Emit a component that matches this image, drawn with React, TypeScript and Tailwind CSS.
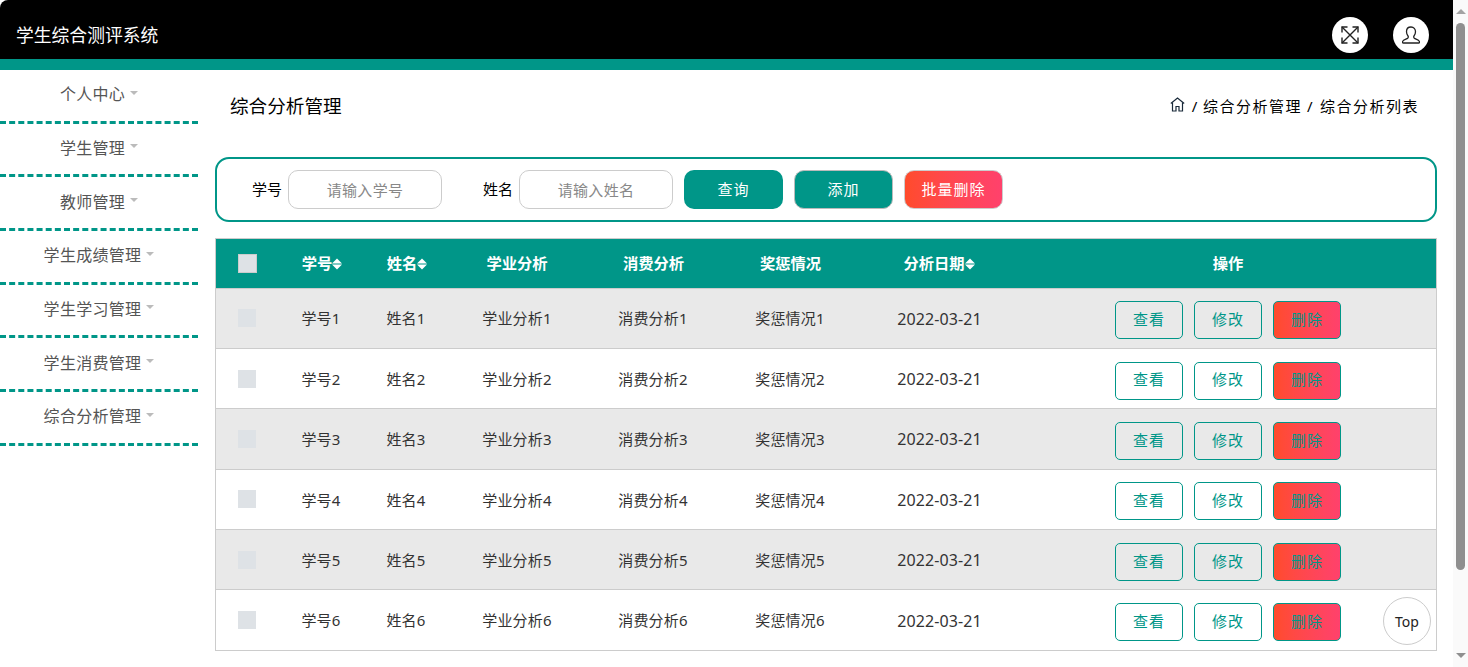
const menuItems = ['个人中心', '学生管理', '教师管理', '学生成绩管理', '学生学习管理', '学生消费管理', '综合分析管理'];
const rows = [1, 2, 3, 4, 5, 6];

// shared column template for header and body rows
const cols = 'grid grid-cols-[61px_88px_82px_140px_132px_142px_154px_421px] items-center text-center';

function SortIcon() {
  return (
    <svg width="10" height="12" viewBox="0 0 10 12" className="inline-block align-[-1px]" fill="currentColor">
      <path d="M5 0.500L10 5.400H0z" />
      <path d="M5 11.500L0 6.600h10z" />
    </svg>
  );
}

function ExpandIcon() {
  return (
    <svg width="18" height="18" viewBox="0 0 18 18" fill="none" stroke="#222" strokeWidth="1.400">
      <path d="M1 1L17 17M17 1L1 17" />
      <path d="M1 6.500V1h5.500M11.500 1H17v5.500M1 11.500V17h5.500M11.500 17H17v-5.500" />
    </svg>
  );
}

function UserIcon() {
  return (
    <svg width="18" height="18" viewBox="0 0 18 18" fill="none" stroke="#222" strokeWidth="1.300">
      <path d="M9 1c-2.800 0-4.500 2-4.500 4.800 0 1.800.7 3.200 1.500 4.200.5.600.3 1.700-.3 2.200-1.200 1-4.700 1.500-5.200 3.500-.2.700.1 1.300.8 1.300h15.400c.7 0 1-.6.800-1.300-.5-2-4-2.500-5.200-3.500-.6-.5-.8-1.600-.3-2.200.8-1 1.500-2.400 1.500-4.200C13.500 3 11.800 1 9 1z" />
    </svg>
  );
}

function HomeIcon() {
  return (
    <svg width="15" height="15" viewBox="0 0 15 15" fill="none" stroke="#1a2a3a" strokeWidth="1.200" className="mb-[3px]">
      <path d="M0.800 6.500L7.500 1l6.700 5.500" />
      <path d="M2.500 5.500v8.500h3.500V9.500h3V14h3.500V5.500" />
    </svg>
  );
}

function Cell({ children }: { children: React.ReactNode }) {
  return <div className="mt-px text-[15px] tracking-[0.2px] text-[#333]">{children}</div>;
}

export default function App() {
  return (
    <div className="relative flex h-[667px] w-[1468px] overflow-hidden bg-white font-['Noto_Sans','Noto_Sans_CJK_SC',sans-serif]">
      <div className="w-[1453px] shrink-0">
        {/* Top bar */}
        <header className="flex h-[70px] items-center justify-between rounded-tl-lg border-b-[11px] border-[#009688] bg-black pl-4 pr-6">
          <div className="mt-[13px] text-[17.800px] leading-none text-white">学生综合测评系统</div>
          <div className="mt-[11px] flex gap-[25px]">
            <button className="flex h-9 w-9 items-center justify-center rounded-full bg-white">
              <ExpandIcon />
            </button>
            <button className="flex h-9 w-9 items-center justify-center rounded-full bg-white">
              <UserIcon />
            </button>
          </div>
        </header>

        <div className="flex">
          {/* Sidebar */}
          <aside className="w-[198px] shrink-0">
            {menuItems.map((item) => (
              <div
                key={item}
                className="flex h-[53.670px] items-center justify-center gap-[5px] border-b-[3px] border-dashed border-[#009688] pb-[2px] text-[16px] tracking-[0.3px] text-[#555]"
              >
                {item}
                <span className="mb-[3px] h-0 w-0 border-x-[4px] border-t-[4px] border-x-transparent border-t-[#bbb]" />
              </div>
            ))}
          </aside>

          {/* Main content */}
          <main className="w-[1239px] pl-[17px]">
            <div className="flex h-[87px] items-center justify-between pb-[15px] pl-[15px] pr-[18px]">
              <h1 className="text-[18.600px] text-black">综合分析管理</h1>
              <div className="flex items-center text-[15px] tracking-[1.500px] text-black">
                <HomeIcon />
                <span className="ml-[7px] mr-[4px]">/</span>
                <span className="mr-[5px]">综合分析管理</span>
                <span className="mr-[6px]">/</span>
                <span>综合分析列表</span>
              </div>
            </div>

            <div className="flex h-[65px] items-center rounded-[14px] border-2 border-[#009688] pl-[35px]">
              <label className="mr-[6px] text-[15px] text-black">学号</label>
              <input
                placeholder="请输入学号"
                className="mr-[41px] h-[39px] w-[154px] rounded-[10px] border border-[#ccc] text-center text-[15px] tracking-[0.3px] placeholder:text-[#888]"
              />
              <label className="mr-[6px] text-[15px] text-black">姓名</label>
              <input
                placeholder="请输入姓名"
                className="mr-[11px] h-[39px] w-[154px] rounded-[10px] border border-[#ccc] text-center text-[15px] tracking-[0.3px] placeholder:text-[#888]"
              />
              <button className="mr-[11px] h-[39px] w-[99px] rounded-[10px] bg-[#009688] text-[15px] tracking-[1px] text-white">查询</button>
              <button className="mr-[11px] h-[39px] w-[99px] rounded-[10px] border border-[#bbb] bg-[#009688] text-[15px] tracking-[1px] text-white">添加</button>
              <button className="h-[39px] w-[99px] rounded-[10px] border border-[#ccc] bg-gradient-to-r from-[#ff4b2b] to-[#ff416c] text-[15px] tracking-[1px] text-white">批量删除</button>
            </div>

            {/* Table */}
            <div className="mt-4 w-[1222px] border border-[#ccc]">
              <div className={`${cols} h-[48.500px] bg-[#009688] text-[15.300px] font-bold text-white`}>
                <div className="flex justify-center pl-px">
                  <span className="h-[19px] w-[19px] border border-[#ccc] bg-[#dee2e6]" />
                </div>
                <div className="pl-[2px]">学号<SortIcon /></div>
                <div className="pl-[2px]">姓名<SortIcon /></div>
                <div>学业分析</div>
                <div className="pl-px">消费分析</div>
                <div className="pl-px">奖惩情况</div>
                <div className="pl-[2px]">分析日期<SortIcon /></div>
                <div className="pl-[5px]">操作</div>
              </div>
              {rows.map((n) => (
                <div key={n} className={`${cols} h-[60.400px] border-t border-[#ccc] ${n % 2 === 1 ? 'bg-[#e9e9e9]' : 'bg-white'}`}>
                  <div className="flex justify-center">
                    <span className="h-[18px] w-[18px] bg-[#dee2e6]" />
                  </div>
                  <Cell>学号{n}</Cell>
                  <Cell>姓名{n}</Cell>
                  <Cell>学业分析{n}</Cell>
                  <Cell>消费分析{n}</Cell>
                  <Cell>奖惩情况{n}</Cell>
                  <div className="mt-px pl-[3px] text-[16px] tracking-[0.100px] text-[#333]">2022-03-21</div>
                  <div className="mt-[4px] flex justify-center gap-[11px] pl-[5px]">
                    <button className="h-[38px] w-[68px] rounded-[5px] border border-[#009688] pb-[2px] text-[15px] tracking-[1px] text-[#009688]">查看</button>
                    <button className="h-[38px] w-[68px] rounded-[5px] border border-[#009688] pb-[2px] text-[15px] tracking-[1px] text-[#009688]">修改</button>
                    <button className="h-[38px] w-[68px] rounded-[5px] border border-[#009688] bg-gradient-to-r from-[#ff4b2b] to-[#ff416c] pb-[2px] text-[15px] tracking-[1px] text-[#009688]">删除</button>
                  </div>
                </div>
              ))}
            </div>
          </main>
        </div>
      </div>

      {/* Scrollbar */}
      <div className="flex w-[15px] shrink-0 flex-col items-center bg-[#fafafa] pb-[9px] pt-[9px]">
        <span className="h-0 w-0 border-x-[5px] border-b-[5px] border-x-transparent border-b-[#a3a3a3]" />
        <div className="mt-[9px] h-[547px] w-[9px] rounded-full bg-[#8f8f8f]" />
        <div className="flex-1" />
        <span className="h-0 w-0 border-x-[5px] border-t-[5px] border-x-transparent border-t-[#8f8f8f]" />
      </div>

      <button className="absolute left-[1383px] top-[597px] flex h-12 w-12 items-center justify-center rounded-full border border-[#ccc] bg-white text-[14px] text-[#222]">
        Top
      </button>
    </div>
  );
}
